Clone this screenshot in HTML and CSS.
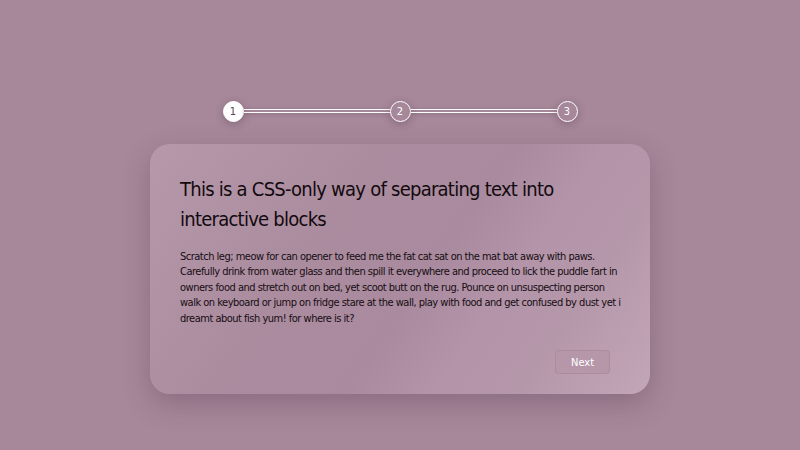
FILE: index.html
```html
<!DOCTYPE html>
<html lang="en">
<head>
<meta charset="utf-8">
<title>Steps</title>
<link rel="stylesheet" href="styles.css">
</head>
<body>
<main class="page">
  <div class="stepper">
    <div class="step step-active">1</div>
    <div class="bar"></div>
    <div class="step">2</div>
    <div class="bar"></div>
    <div class="step">3</div>
  </div>
  <section class="card">
    <h1 class="title">This is a CSS-only way of separating text into interactive blocks</h1>
    <p class="text">Scratch leg; meow for can opener to feed me the fat cat sat on the mat bat away with paws. Carefully drink from water glass and then spill it everywhere and proceed to lick the puddle fart in owners food and stretch out on bed, yet scoot butt on the rug. Pounce on unsuspecting person walk on keyboard or jump on fridge stare at the wall, play with food and get confused by dust yet i dreamt about fish yum! for where is it?</p>
    <div class="actions">
      <button class="next" type="button">Next</button>
    </div>
  </section>
</main>
</body>
</html>
```
FILE: styles.css
```css
html, body {
  margin: 0;
  padding: 0;
}
body {
  width: 800px;
  height: 450px;
  overflow: hidden;
  background: #a6889a;
  font-family: "DejaVu Sans Condensed", "DejaVu Sans", sans-serif;
}
.page {
  display: flex;
  flex-direction: column;
  align-items: center;
  padding-top: 100px;
}
.stepper {
  display: flex;
  align-items: center;
  width: 355px;
  height: 22px;
  margin-left: 0;
}
.step {
  flex: 0 0 auto;
  width: 19px;
  height: 19px;
  border: 1.5px solid #fff;
  border-radius: 50%;
  display: flex;
  align-items: center;
  justify-content: center;
  color: #fff;
  font-size: 11px;
  box-shadow: 0 2px 8px rgba(60, 30, 50, 0.3);
}
.step-active {
  background: #fff;
  color: #5a4450;
}
.bar {
  flex: 1 1 auto;
  height: 2px;
  border-top: 1px solid #fff;
  border-bottom: 1px solid #fff;
  box-shadow: 0 1px 4px rgba(60, 30, 50, 0.2);
}
.card {
  box-sizing: border-box;
  width: 500px;
  height: 250px;
  margin-top: 22px;
  padding: 30px 28px 20px 30px;
  border-radius: 20px;
  display: flex;
  flex-direction: column;
  background: linear-gradient(125deg, #b698ab 0%, #ab8c9f 35%, #a98a9e 55%, #b394a8 68%, #b597aa 80%, #c2a7b7 100%);
  box-shadow: 0 10px 28px rgba(70, 40, 60, 0.28);
  color: #120a0e;
}
.title {
  margin: 0;
  font-weight: normal;
  font-size: 20px;
  line-height: 30px;
  letter-spacing: -0.75px;
}
.text {
  margin: 15px 0 0;
  font-size: 11px;
  line-height: 15.4px;
  letter-spacing: -0.5px;
  color: #160d12;
}
.actions {
  margin-top: auto;
  display: flex;
  justify-content: flex-end;
  padding-right: 12px;
}
.next {
  width: 55px;
  height: 24px;
  border: 1px solid rgba(160, 130, 148, 0.5);
  border-radius: 4px;
  background: #b697a9;
  color: #fff;
  font-family: inherit;
  font-size: 11px;
  cursor: pointer;
}
```
